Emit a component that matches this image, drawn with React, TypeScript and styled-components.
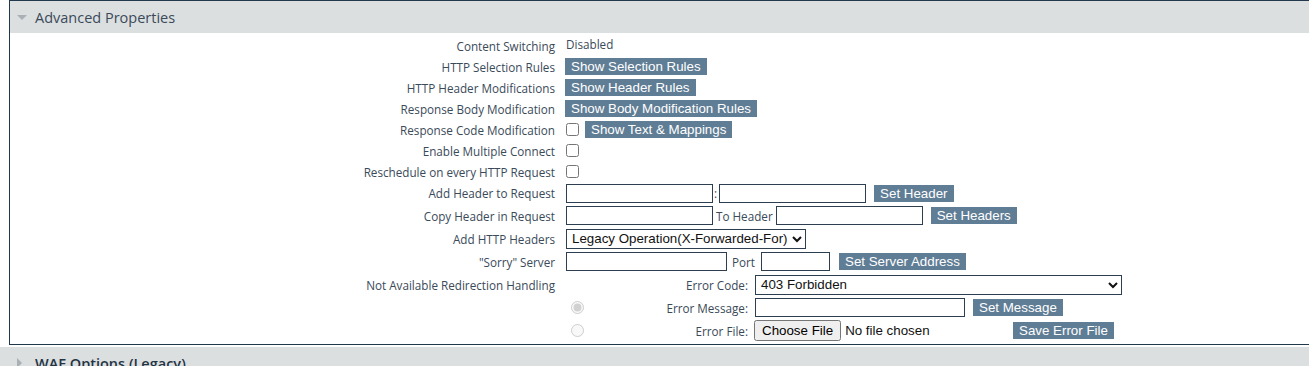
import React from "react";
import styled, { createGlobalStyle } from "styled-components";

const Global = createGlobalStyle`
  html, body { margin: 0; padding: 0; background: #fff; }
  body { overflow: hidden; }
`;

const Page = styled.div`
  width: 1309px;
  height: 366px;
  overflow: hidden;
  font-family: "Open Sans", "Noto Sans", sans-serif;
`;

const Section = styled.section`
  margin-left: 9px;
  margin-right: -10px;
  border: 1px solid #22394d;
`;

const Header = styled.div<{ $collapsed?: boolean }>`
  height: 32px;
  background: #dcdfe0;
  display: flex;
  align-items: center;
  gap: 8px;
  padding-left: ${(p) => (p.$collapsed ? "17px" : "7px")};
  font-size: 14.5px;
  color: ${(p) => (p.$collapsed ? "#243444" : "#3a4a5a")};
  font-weight: ${(p) => (p.$collapsed ? 600 : 400)};
`;

const CollapsedWrap = styled.div`
  margin-top: 2px;
`;

const TriDown = styled.span`
  width: 0;
  height: 0;
  border-left: 5px solid transparent;
  border-right: 5px solid transparent;
  border-top: 5px solid #a9b0b6;
  margin-top: 1px;
`;

const TriRight = styled.span`
  width: 0;
  height: 0;
  border-top: 5px solid transparent;
  border-bottom: 5px solid transparent;
  border-left: 5px solid #a9b0b6;
  margin-right: 5px;
`;

const Body = styled.div`
  padding: 2px 0 2px 0;
`;

const Row = styled.div<{ $h: number }>`
  display: grid;
  grid-template-columns: 545px auto;
  column-gap: 11px;
  align-items: center;
  height: ${(p) => p.$h}px;
`;

const Label = styled.div`
  text-align: right;
  font-size: 11.7px;
  color: #3a4a59;
  white-space: nowrap;
`;

const Value = styled.div`
  display: flex;
  align-items: center;
  font-size: 11.7px;
  color: #3a4a59;
  white-space: nowrap;
`;

const Plain = styled.span<{ $ml?: number; $mr?: number; $up?: number }>`
  font-size: 11.7px;
  color: #3a4a59;
  margin-left: ${(p) => p.$ml ?? 0}px;
  margin-right: ${(p) => p.$mr ?? 0}px;
  position: relative;
  top: ${(p) => -(p.$up ?? 0)}px;
`;

const Btn = styled.button<{ $ml?: number }>`
  background: #5f7d95;
  color: #fff;
  border: none;
  border-radius: 0;
  font-family: "Liberation Sans", Arial, sans-serif;
  font-size: 13.333px;
  height: 17px;
  line-height: 17px;
  padding: 0 6px;
  margin: 0 0 0 ${(p) => p.$ml ?? 0}px;
  white-space: nowrap;
  cursor: pointer;
`;

const TextInput = styled.input<{ $w: number }>`
  box-sizing: border-box;
  width: ${(p) => p.$w}px;
  height: 19px;
  border: 1px solid #2c3e50;
  border-radius: 0;
  padding: 0 2px;
  margin: 0;
  font-family: "Liberation Sans", Arial, sans-serif;
  font-size: 13.333px;
  background: #fff;
`;

const Select = styled.select<{ $w: number }>`
  box-sizing: border-box;
  width: ${(p) => p.$w}px;
  height: 20px;
  border: 1px solid #2c3e50;
  border-radius: 0;
  padding: 0 1px;
  margin: 0;
  font-family: "Liberation Sans", Arial, sans-serif;
  font-size: 13.333px;
  color: #111;
  background: #fff;
`;

const Check = styled.input.attrs({ type: "checkbox" })`
  width: 13px;
  height: 13px;
  margin: 0 6px 0 0;
`;

const Radio = styled.input.attrs({ type: "radio" })`
  width: 13px;
  height: 13px;
  margin: 0 0 0 5px;
`;

const FileInput = styled.input.attrs({ type: "file" })`
  width: 251px;
  margin: 0 0 0 -1px;
  font-family: "Liberation Sans", Arial, sans-serif;
  font-size: 13.333px;
  color: #111;
`;

const SubRow = styled.div<{ $h: number }>`
  display: grid;
  grid-template-columns: 545px 11px 30px 159px auto;
  align-items: center;
  height: ${(p) => p.$h}px;
`;

const SubLabel = styled.div`
  text-align: right;
  font-size: 11.7px;
  color: #3a4a59;
  white-space: nowrap;
  padding-right: 7px;
`;

const Cell = styled.div`
  display: flex;
  align-items: center;
`;

export default function App() {
  return (
    <Page>
      <Global />
      <Section>
        <Header>
          <TriDown />
          <span>Advanced Properties</span>
        </Header>
        <Body>
          <Row $h={21}>
            <Label>Content Switching</Label>
            <Value>
              <Plain $up={2}>Disabled</Plain>
            </Value>
          </Row>
          <Row $h={21}>
            <Label>HTTP Selection Rules</Label>
            <Value>
              <Btn $ml={-1}>Show Selection Rules</Btn>
            </Value>
          </Row>
          <Row $h={21}>
            <Label>HTTP Header Modifications</Label>
            <Value>
              <Btn $ml={-1}>Show Header Rules</Btn>
            </Value>
          </Row>
          <Row $h={21}>
            <Label>Response Body Modification</Label>
            <Value>
              <Btn $ml={-1}>Show Body Modification Rules</Btn>
            </Value>
          </Row>
          <Row $h={21}>
            <Label>Response Code Modification</Label>
            <Value>
              <Check />
              <Btn>Show Text &amp; Mappings</Btn>
            </Value>
          </Row>
          <Row $h={21}>
            <Label>Enable Multiple Connect</Label>
            <Value>
              <Check />
            </Value>
          </Row>
          <Row $h={21}>
            <Label>Reschedule on every HTTP Request</Label>
            <Value>
              <Check />
            </Value>
          </Row>
          <Row $h={22}>
            <Label>Add Header to Request</Label>
            <Value>
              <TextInput $w={147} />
              <Plain $ml={1} $mr={2}>:</Plain>
              <TextInput $w={147} />
              <Btn $ml={8}>Set Header</Btn>
            </Value>
          </Row>
          <Row $h={23}>
            <Label>Copy Header in Request</Label>
            <Value>
              <TextInput $w={147} />
              <Plain $ml={3} $mr={3}>To Header</Plain>
              <TextInput $w={147} />
              <Btn $ml={8}>Set Headers</Btn>
            </Value>
          </Row>
          <Row $h={23}>
            <Label>Add HTTP Headers</Label>
            <Value>
              <Select $w={240} defaultValue="legacy">
                <option value="legacy">Legacy Operation(X-Forwarded-For)</option>
              </Select>
            </Value>
          </Row>
          <Row $h={23}>
            <Label>"Sorry" Server</Label>
            <Value>
              <TextInput $w={161} />
              <Plain $ml={5} $mr={6}>Port</Plain>
              <TextInput $w={69} />
              <Btn $ml={9}>Set Server Address</Btn>
            </Value>
          </Row>
          <SubRow $h={23}>
            <Label>Not Available Redirection Handling</Label>
            <Cell />
            <Cell />
            <SubLabel>Error Code:</SubLabel>
            <Cell>
              <Select $w={367} defaultValue="403">
                <option value="403">403 Forbidden</option>
              </Select>
            </Cell>
          </SubRow>
          <SubRow $h={23}>
            <Label />
            <Cell />
            <Cell>
              <Radio name="errsrc" defaultChecked disabled />
            </Cell>
            <SubLabel>Error Message:</SubLabel>
            <Cell>
              <TextInput $w={210} />
              <Btn $ml={8}>Set Message</Btn>
            </Cell>
          </SubRow>
          <SubRow $h={23}>
            <Label />
            <Cell />
            <Cell>
              <Radio name="errsrc" disabled />
            </Cell>
            <SubLabel>Error File:</SubLabel>
            <Cell>
              <FileInput />
              <Btn $ml={8}>Save Error File</Btn>
            </Cell>
          </SubRow>
        </Body>
      </Section>
      <CollapsedWrap>
        <Header $collapsed>
          <TriRight />
          <span>WAF Options (Legacy)</span>
        </Header>
      </CollapsedWrap>
    </Page>
  );
}
